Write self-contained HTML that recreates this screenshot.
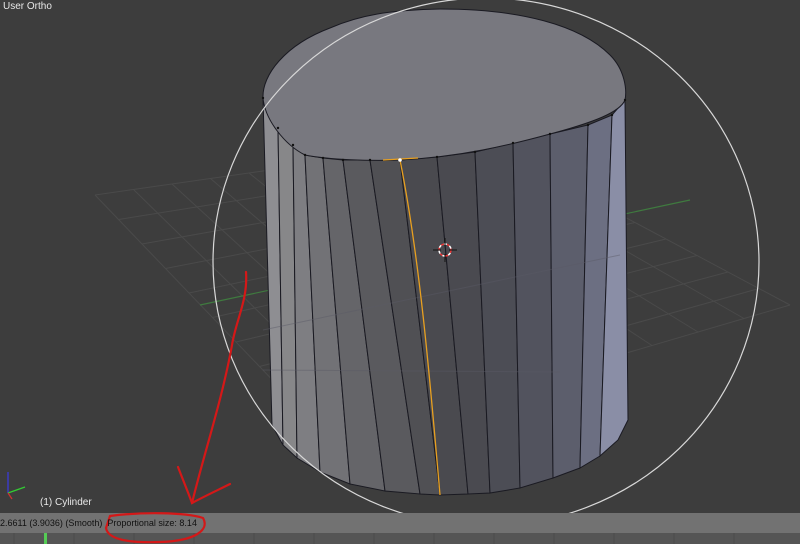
<!DOCTYPE html>
<html><head><style>
html,body{margin:0;padding:0;background:#3d3d3d;width:800px;height:544px;overflow:hidden;font-family:"Liberation Sans",sans-serif}
.t{position:absolute;font-size:10px}
</style></head><body>
<svg width="800" height="544" style="position:absolute;left:0;top:0">
<rect width="800" height="544" fill="#3d3d3d"/>
<g stroke="#4a4a4a" stroke-width="1">
<line x1="95" y1="195" x2="330" y2="440"/><line x1="133.5" y1="189.5" x2="376" y2="426.5"/><line x1="172" y1="184" x2="422" y2="413"/><line x1="210.5" y1="178.5" x2="468" y2="399.5"/><line x1="249" y1="173" x2="514" y2="386"/><line x1="287.5" y1="167.5" x2="560" y2="372.5"/><line x1="326" y1="162" x2="606" y2="359"/><line x1="364.5" y1="156.5" x2="652" y2="345.5"/><line x1="403" y1="151" x2="698" y2="332"/><line x1="441.5" y1="145.5" x2="744" y2="318.5"/><line x1="480" y1="140" x2="790" y2="305"/>
<line x1="95" y1="195" x2="480" y2="140"/><line x1="118.5" y1="219.5" x2="511" y2="156.5"/><line x1="142" y1="244" x2="542" y2="173"/><line x1="165.5" y1="268.5" x2="573" y2="189.5"/><line x1="189" y1="293" x2="604" y2="206"/><line x1="212.5" y1="317.5" x2="635" y2="222.5"/><line x1="236" y1="342" x2="666" y2="239"/><line x1="259.5" y1="366.5" x2="697" y2="255.5"/><line x1="283" y1="391" x2="728" y2="272"/><line x1="306.5" y1="415.5" x2="759" y2="288.5"/><line x1="330" y1="440" x2="790" y2="305"/>
</g>
<line x1="200" y1="305" x2="690" y2="200" stroke="#3f7a3f" stroke-width="1.2"/>
<line x1="515" y1="320" x2="555" y2="360" stroke="#7a3a3a" stroke-width="1"/>
<g stroke="#1a1a22" stroke-width="1">
<polygon points="263,98 278,128 283,445 272,425" fill="#8e8e92"/>
<polygon points="278,128 293,145 297,458 283,445" fill="#878789"/>
<polygon points="293,145 305,155 320,472 297,458" fill="#7e7e82"/>
<polygon points="305,155 323,158 350,484 320,472" fill="#727276"/>
<polygon points="323,158 343,160 385,491 350,484" fill="#656569"/>
<polygon points="343,160 370,160 420,494 385,491" fill="#5a5a5e"/>
<polygon points="370,160 400,160 440,495 420,494" fill="#505054"/>
<polygon points="400,160 437,157 468,494 440,495" fill="#4a4a4f"/>
<polygon points="437,157 475,152 490,493 468,494" fill="#4a4a50"/>
<polygon points="475,152 513,143 520,488 490,493" fill="#4c4d55"/>
<polygon points="513,143 550,134 553,478 520,488" fill="#52535e"/>
<polygon points="550,134 588,125 580,468 553,478" fill="#5c5e6c"/>
<polygon points="588,125 612,115 600,456 580,468" fill="#6c6f82"/>
<polygon points="612,115 625,100 628,420 618,440 600,456" fill="#8a8ea6"/>
<path d="M263,98 C262,75 285,45 330,28 C360,15 390,10 440,9 C520,9 580,25 610,55 C625,70 627,90 625,100 C620,112 595,122 550,134 C510,145 460,157 400,160 C370,161 330,160 305,155 C285,145 265,120 263,98 Z" fill="#78787f"/>
</g>
<g stroke="#5a5a66" stroke-width="1" opacity="0.45">
<line x1="263" y1="330" x2="620" y2="255"/><line x1="263" y1="370" x2="560" y2="372"/>
</g>
<g fill="#111">
<circle cx="263" cy="98" r="1.2"/><circle cx="278" cy="128" r="1.2"/><circle cx="293" cy="145" r="1.2"/><circle cx="305" cy="155" r="1.2"/><circle cx="323" cy="158" r="1.2"/><circle cx="343" cy="160" r="1.2"/><circle cx="370" cy="160" r="1.2"/><circle cx="437" cy="157" r="1.2"/><circle cx="475" cy="152" r="1.2"/><circle cx="513" cy="143" r="1.2"/><circle cx="550" cy="134" r="1.2"/><circle cx="588" cy="125" r="1.2"/><circle cx="612" cy="115" r="1.2"/><circle cx="625" cy="100" r="1.2"/>
</g>
<path d="M400,160 C420,260 430,380 440,495" stroke="#e8a020" stroke-width="1.3" fill="none"/>
<path d="M383,160 L418,158" stroke="#e8a020" stroke-width="1.3"/>
<circle cx="400" cy="160" r="1.8" fill="#fff"/>
<ellipse cx="486" cy="262" rx="273" ry="264" fill="none" stroke="#d8d8d8" stroke-width="1.2"/>
<g transform="translate(445,250)"><circle r="6" fill="none" stroke="#e33" stroke-width="1.5" stroke-dasharray="3 3"/><circle r="6" fill="none" stroke="#fff" stroke-width="1.5" stroke-dasharray="3 3" stroke-dashoffset="3"/><line x1="-12" y1="0" x2="-4" y2="0" stroke="#111"/><line x1="4" y1="0" x2="12" y2="0" stroke="#111"/><line x1="0" y1="-12" x2="0" y2="-4" stroke="#111"/><line x1="0" y1="4" x2="0" y2="12" stroke="#111"/></g>
<g stroke-width="1.3"><line x1="8" y1="493" x2="8" y2="472" stroke="#3b3bd8"/><line x1="8" y1="493" x2="25" y2="487" stroke="#3c3"/><line x1="8" y1="493" x2="12" y2="499" stroke="#c33"/></g>
<rect x="0" y="513" width="800" height="20" fill="#727272"/>
<rect x="0" y="533" width="800" height="11" fill="#555"/>
<g stroke="#4a4a4a"><line x1="14" y1="533" x2="14" y2="544"/><line x1="74" y1="533" x2="74" y2="544"/><line x1="134" y1="533" x2="134" y2="544"/><line x1="194" y1="533" x2="194" y2="544"/><line x1="254" y1="533" x2="254" y2="544"/><line x1="314" y1="533" x2="314" y2="544"/><line x1="374" y1="533" x2="374" y2="544"/><line x1="434" y1="533" x2="434" y2="544"/><line x1="494" y1="533" x2="494" y2="544"/><line x1="554" y1="533" x2="554" y2="544"/><line x1="614" y1="533" x2="614" y2="544"/><line x1="674" y1="533" x2="674" y2="544"/><line x1="734" y1="533" x2="734" y2="544"/></g>
<rect x="44" y="533" width="3" height="11" fill="#5c5"/>
<g stroke="#d41818" stroke-width="2.2" fill="none" stroke-linecap="round">
<path d="M246,272 C248,300 236,320 232,345 C222,400 205,450 192,503"/>
<path d="M178,467 C183,480 188,492 192,503 C205,496 218,490 230,484"/>
<path d="M110,516 C140,512 185,512 203,518 C210,530 195,541 160,542 C130,543 108,540 106,528 Z"/>
</g>
</svg>
<div class="t" style="left:3px;top:1px;color:#e8e8e8">User Ortho</div>
<div class="t" style="left:40px;top:497px;color:#e8e8e8">(1) Cylinder</div>
<div class="t" style="left:0px;top:518px;color:#111;font-size:9px">2.6611 (3.9036) (Smooth)&nbsp;&nbsp;Proportional size: 8.14</div>
</body></html>
